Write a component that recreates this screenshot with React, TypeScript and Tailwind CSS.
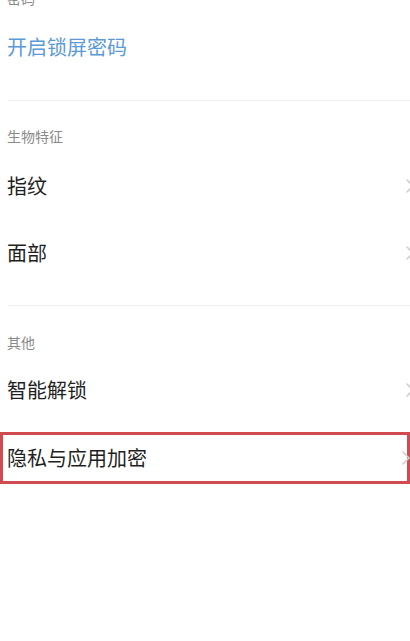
const font = { fontFamily: '"Noto Sans CJK SC", "Noto Sans", sans-serif' };

const Chevron = () => (
    <svg width="10" height="16" viewBox="0 0 10 16" className="-mr-[5px] shrink-0">
        <path d="M2 2 L8 8 L2 14" fill="none" stroke="#cfcfcf" strokeWidth="1.6" strokeLinecap="round" strokeLinejoin="round" />
    </svg>
);

const Label = ({ text, className = '' }: { text: string; className?: string }) => (
    <div className={`h-[20px] flex items-center pl-[7px] text-[14px] text-[#8a8a8a] ${className}`}>{text}</div>
);

const Row = ({ text, className = '' }: { text: string; className?: string }) => (
    <div className={`h-[67px] flex items-center justify-between pl-[7px] text-[20px] text-[#1f1f1f] ${className}`}>
        <span>{text}</span>
        <Chevron />
    </div>
);

const Divider = ({ className = '' }: { className?: string }) => (
    <div className={`ml-[8px] h-px bg-[#f2f2f2] ${className}`} />
);

export default function App() {
    return (
        <div className="w-[410px] h-[641px] bg-white overflow-hidden flex flex-col" style={font}>
            <Label text="密码" className="-mt-[12px]" />
            <div className="h-[78px] flex items-center pl-[7px] text-[20px] text-[#5b9ad6]">开启锁屏密码</div>
            <Divider className="mt-[14px]" />

            <Label text="生物特征" className="mt-[25px]" />
            <Row text="指纹" className="mt-[6px]" />
            <Row text="面部" />
            <Divider className="mt-[19px]" />

            <Label text="其他" className="mt-[26px]" />
            <Row text="智能解锁" className="mt-[4px]" />

            <div className="mt-[9px] h-[52px] border-[3px] border-[#d04a50] flex items-center justify-between pl-[4px] pr-[1px] text-[20px] text-[#1f1f1f]">
                <span>隐私与应用加密</span>
                <Chevron />
            </div>
        </div>
    );
}
